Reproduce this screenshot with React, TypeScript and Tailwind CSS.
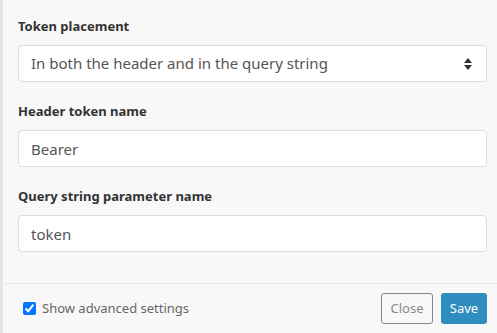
import { useState } from "react";

const font = { fontFamily: '"Segoe UI", "Noto Sans", "Open Sans", sans-serif' };

const Field = ({ label, children }: { label: string; children: React.ReactNode }) => (
  <div className="flex flex-col">
    <label className="text-[13px] font-bold text-[#333] leading-[18px] mb-[10px]">{label}</label>
    {children}
  </div>
);

export default function App() {
  const [advanced, setAdvanced] = useState(true);
  return (
    <div className="w-[497px] h-[333px] flex bg-[#f8f8f8] overflow-hidden" style={font}>
      <div className="w-[3px] bg-[#e4e4e4] shrink-0" />
      <div className="flex-1 flex flex-col">
        <div className="flex flex-col gap-[20px] pl-[15px] pr-[10px] pt-[17px] h-[283px]">
          <Field label="Token placement">
            <div className="h-[37px] bg-white border border-[#dcdcdc] rounded-[4px] flex items-center justify-between pl-[12px] pr-[14px] text-[15px] text-[#555]">
              <span>In both the header and in the query string</span>
              <svg width="8" height="12" viewBox="0 0 8 12" className="fill-[#333]">
                <path d="M4 0 L8 5 H0 Z" />
                <path d="M4 12 L8 7 H0 Z" />
              </svg>
            </div>
          </Field>
          <Field label="Header token name">
            <input
              defaultValue="Bearer"
              className="h-[37px] bg-white border border-[#dcdcdc] rounded-[4px] px-[12px] text-[15px] text-[#555] outline-none"
            />
          </Field>
          <Field label="Query string parameter name">
            <input
              defaultValue="token"
              className="h-[37px] bg-white border border-[#dcdcdc] rounded-[4px] px-[12px] text-[15px] text-[#555] outline-none"
            />
          </Field>
        </div>
        <div className="border-t border-[#e8e8e8] flex items-center justify-between pl-[20px] pr-[10px] flex-1">
          <label className="flex items-center gap-[6px] text-[13px] text-[#666]">
            <input
              type="checkbox"
              checked={advanced}
              onChange={(e) => setAdvanced(e.target.checked)}
              className="w-[13px] h-[13px] accent-[#0075ff] m-0"
            />
            Show advanced settings
          </label>
          <div className="flex gap-[8px]">
            <button className="h-[31px] w-[52px] border border-[#888] rounded-[3px] text-[13px] text-[#888] bg-transparent">
              Close
            </button>
            <button className="h-[31px] w-[46px] rounded-[3px] text-[13px] text-white bg-[#2f8dbf]">
              Save
            </button>
          </div>
        </div>
      </div>
    </div>
  );
}
